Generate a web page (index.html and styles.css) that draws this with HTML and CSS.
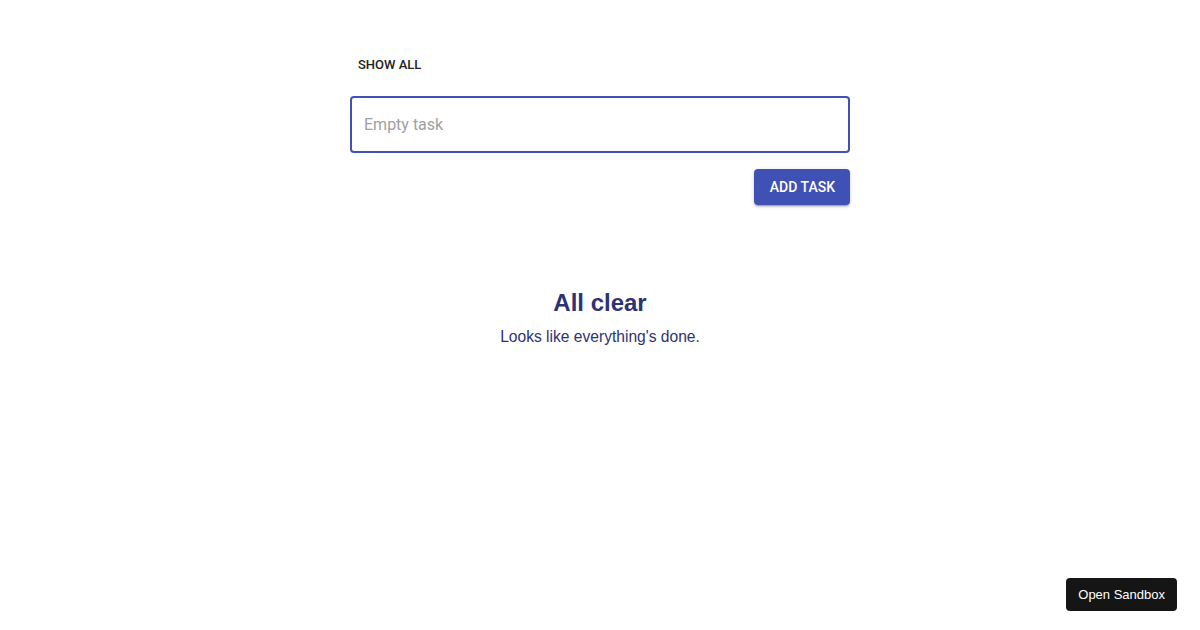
FILE: index.html
```html
<!DOCTYPE html>
<html lang="en">
<head>
    <meta charset="UTF-8">
    <meta name="viewport" content="width=device-width, initial-scale=1.0">
    <title>Todo</title>
    <link rel="stylesheet" href="styles.css">
</head>
<body>
<div id="app">
    <div class="filters">
        <button type="button" class="text-btn">Show all</button>
    </div>
    <form id="taskform">
        <div class="field">
            <input type="text" id="task" placeholder="Empty task" autofocus>
        </div>
        <div class="actions">
            <button type="submit" class="button">Add task</button>
        </div>
    </form>
    <div class="empty">
        <h2>All clear</h2>
        <p>Looks like everything's done.</p>
    </div>
</div>
<a class="sandbox" href="#">Open Sandbox</a>
</body>
</html>
```

FILE: styles.css
```css
body {
    margin: 0;
    background: #ffffff;
    font-family: Roboto, 'Liberation Sans', sans-serif;
}
#app {
    width: 500px;
    margin: 0 auto;
    padding-top: 46px;
}
.text-btn {
    height: 36px;
    padding: 6px 8px;
    border: none;
    background: none;
    font-family: Roboto, sans-serif;
    font-size: 13px;
    font-weight: 500;
    text-transform: uppercase;
    color: #222222;
    cursor: pointer;
}
.field {
    margin-top: 14px;
}
.field input {
    width: 100%;
    height: 57px;
    padding: 0 12px;
    box-sizing: border-box;
    border: 2px solid #3f51b5;
    border-radius: 4px;
    font-family: Roboto, sans-serif;
    font-size: 16px;
    color: #222222;
    outline: none;
}
.field input::placeholder {
    color: #a0a0a0;
}
.actions {
    display: flex;
    justify-content: flex-end;
    margin-top: 16px;
}
.button {
    height: 36px;
    padding: 0 15px 0 16px;
    border: none;
    border-radius: 4px;
    background: #3f51b5;
    color: #ffffff;
    font-family: Roboto, sans-serif;
    font-size: 14px;
    font-weight: 500;
    text-transform: uppercase;
    box-shadow: 0 3px 1px -2px rgba(0,0,0,0.2), 0 2px 2px 0 rgba(0,0,0,0.14), 0 1px 5px 0 rgba(0,0,0,0.12);
    cursor: pointer;
}
.empty {
    margin-top: 82px;
    text-align: center;
    color: #2e3273;
    font-family: 'Liberation Sans', Arial, sans-serif;
}
.empty h2 {
    margin: 0;
    font-size: 24px;
    line-height: 32px;
}
.empty p {
    margin: 9px 0 0;
    font-size: 15.6px;
}
.sandbox {
    position: fixed;
    right: 23px;
    bottom: 19px;
    padding: 8px 12px;
    border-radius: 4px;
    background: #151515;
    color: #ffffff;
    font-family: 'Liberation Sans', Arial, sans-serif;
    font-size: 13px;
    line-height: 17px;
    text-decoration: none;
}
```
